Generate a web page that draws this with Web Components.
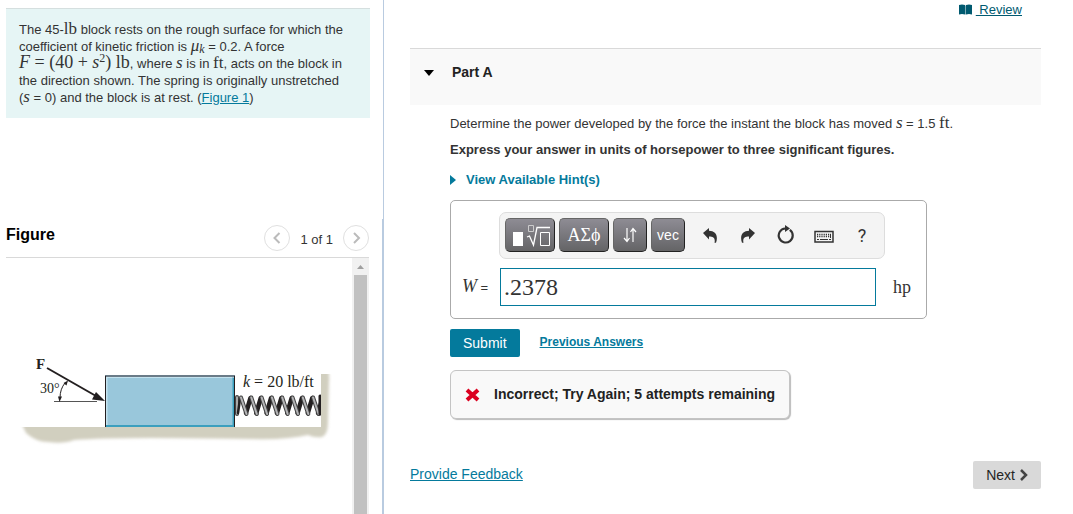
<!DOCTYPE html>
<html lang="en">
<head>
<meta charset="utf-8">
<meta name="viewport" content="width=device-width, initial-scale=1">
<title>Part A</title>
<style>
  body {
    --teal: #047a9c;
    --teal-dark: #005a70;
    --text: #333;
    --rule: #d9d9d9;
    --serif: "Liberation Serif", "Times New Roman", serif;
    margin: 0;
    font-family: "Liberation Sans", Arial, sans-serif;
    font-size: 13px;
    line-height: 17px;
    color: var(--text);
    background: #fff;
  }
  a { color: var(--teal); }
  sub, sup {
    font-size: 12px;
    line-height: 0;
    vertical-align: baseline;
    position: relative;
  }
  sub { top: 2px; }
  sup { top: -6px; }
</style>
</head>
<body>
<assignment-page>
  <problem-prompt slot="side">The 45-<math-term>lb</math-term> block rests on the rough surface for which the coefficient of kinetic friction is <math-term><i>μ<sub>k</sub></i></math-term> = 0.2. A force <math-term large><i>F</i> = (40 + <i>s</i><sup>2</sup>) lb</math-term>, where <math-term><i>s</i></math-term> is in <math-term>ft</math-term>, acts on the block in the direction shown. The spring is originally unstretched (<math-term><i>s</i></math-term> = 0) and the block is at rest. (<a href="#figure">Figure 1</a>)</problem-prompt>
  <figure-viewer slot="side" id="figure" count="1">
    <spring-diagram></spring-diagram>
  </figure-viewer>

  <review-link></review-link>
  <question-part label="Part A">
    <p>Determine the power developed by the force the instant the block has moved <math-term><i>s</i></math-term> = 1.5 <math-term>ft</math-term>.</p>
    <p><b>Express your answer in units of horsepower to three significant figures.</b></p>
    <hint-toggle>View Available Hint(s)</hint-toggle>
    <answer-box symbol="W" value=".2378" unit="hp">
      <equation-toolbar></equation-toolbar>
    </answer-box>
    <submit-row></submit-row>
    <feedback-message>Incorrect; Try Again; 5 attempts remaining</feedback-message>
  </question-part>
  <page-footer></page-footer>
</assignment-page>

<script>
class AssignmentPage extends HTMLElement {
  constructor() {
    super();
    const shadow = this.attachShadow({ mode: 'open' });
    shadow.innerHTML = `
      <style>
        :host {
          display: flex;
          height: 100vh;
          overflow: hidden;
        }
        aside {
          flex: 0 0 384px;
          display: flex;
          flex-direction: column;
          box-sizing: border-box;
          min-height: 0;
        }
        main {
          flex: 1;
          min-width: 0;
          padding: 0 32px 0 26px;
        }
      </style>
      <aside><slot name="side"></slot></aside>
      <main><slot></slot></main>
    `;
  }
}

class ProblemPrompt extends HTMLElement {
  constructor() {
    super();
    const shadow = this.attachShadow({ mode: 'open' });
    shadow.innerHTML = `
      <style>
        :host {
          display: block;
          padding: 8px 13px 101px 6px;
          border-right: 1px solid #b9cbe0;
        }
        div {
          padding: 12px 20px 12px 13px;
          border-top: 1px solid #d5dfdf;
          background: #e6f5f5;
        }
      </style>
      <div><slot></slot></div>
    `;
  }
}

class MathTerm extends HTMLElement {
  constructor() {
    super();
    const shadow = this.attachShadow({ mode: 'open' });
    // no whitespace round the slot: it would show up inside the sentence
    shadow.innerHTML = `<style>
        :host {
          font-family: var(--serif);
          font-size: 17px;
          line-height: 0;
          white-space: nowrap;
        }
        :host([large]) { font-size: 18px; }
      </style><slot></slot>`;
  }
}

class FigureViewer extends HTMLElement {
  constructor() {
    super();
    const count = this.getAttribute('count');
    const shadow = this.attachShadow({ mode: 'open' });
    shadow.innerHTML = `
      <style>
        :host {
          flex: 1;
          display: flex;
          flex-direction: column;
          min-height: 0;
          padding: 6px 13px 0 6px;
          border-right: 2px solid #b9cbe0;
        }
        header {
          display: flex;
          align-items: center;
          justify-content: space-between;
          padding-bottom: 6px;
          border-bottom: 1px solid var(--rule);
        }
        h2 {
          margin: 0;
          padding-bottom: 6px;
          font-size: 16px;
          line-height: 20px;
          color: #000;
        }
        nav {
          display: flex;
          align-items: center;
          gap: 10px;
        }
        nav span { padding-top: 2px; }
        button {
          display: grid;
          place-items: center;
          width: 26px;
          height: 26px;
          padding: 0;
          border: 1px solid #e0e0e0;
          border-radius: 50%;
          background: #fff;
        }
        .scroller {
          flex: 1;
          display: flex;
          min-height: 0;
          overflow: hidden;
        }
        .view {
          flex: 1;
          overflow: hidden;
        }
        .track {
          width: 17px;
          display: flex;
          flex-direction: column;
          align-items: center;
          background: #f1f1f1;
        }
        .track svg { flex: none; }
        .thumb {
          flex: 1;
          width: 13px;
          background: #c1c1c1;
        }
      </style>
      <header>
        <h2>Figure</h2>
        <nav aria-label="Figures">
          <button aria-label="Previous figure">
            <svg width="12" height="12" viewBox="0 0 12 12" fill="none" stroke="#bbb" stroke-width="2"><path d="M8.500 1 3.500 6l5 5"/></svg>
          </button>
          <span>1 of ${count}</span>
          <button aria-label="Next figure">
            <svg width="12" height="12" viewBox="0 0 12 12" fill="none" stroke="#bbb" stroke-width="2"><path d="m4 1 5 5-5 5"/></svg>
          </button>
        </nav>
      </header>
      <div class="scroller">
        <div class="view"><slot></slot></div>
        <div class="track">
          <svg width="17" height="17" viewBox="0 0 17 17" fill="#a0a0a0"><path d="M5 11l3.500-4 3.500 4z"/></svg>
          <div class="thumb"></div>
        </div>
      </div>
    `;
  }
}

class SpringDiagram extends HTMLElement {
  constructor() {
    super();
    const shadow = this.attachShadow({ mode: 'open' });

    // coils: dark back strand, then the lighter front strand over it
    let back = '';
    let front = '';
    for (let i = 0; i < 8; i++) {
      const x = 241 + i * 10.3;
      back += `<path d="M${x + 5} 413 ${x + 9.5} 398"/>`;
      front += `<path d="M${x} 397.500 ${x + 5.500} 414"/>`;
    }

    shadow.innerHTML = `
      <style>
        :host { display: block; }
        svg { display: block; }
        text { font-family: var(--serif); fill: #231f20; }
      </style>
      <svg width="346" height="256" viewBox="6 258 346 256" role="img" aria-label="Block pushed against a spring">
        <defs>
          <filter id="soft" x="-5%" y="-20%" width="110%" height="140%"><feGaussianBlur stdDeviation="1.800"/></filter>
          <clipPath id="ground"><path d="M24 427H321V374H335V450H20V427z"/></clipPath>
          <clipPath id="room"><path d="M234 390H321V420H234z"/></clipPath>
        </defs>
        <g clip-path="url(#ground)">
          <path filter="url(#soft)" fill="#d1cfbf" d="M20 420H316V368h10q4 3 3 14l-1 40q0 13-6 15-8 1-14-2-20 5-58 4-60-1-100-1-50 0-76 2-10 4-26 2-12 0-22-9z"/>
        </g>

        <path fill="#99c7db" d="M105 375H235V427H105z"/>
        <path fill="#c4e2ee" d="M106 377H232v1H107.500v47H106z"/>
        <path fill="#3b9fbe" d="M106 425H234v2H106zM232.500 378h1.500v48h-1.500z"/>
        <path fill="#6a7b87" d="M105 375H235v2H105z"/>
        <path fill="#231f20" d="M105 376h1v51h-1zM234 376h1v51h-1z"/>

        <g fill="none" stroke-linecap="round" clip-path="url(#room)">
          <path d="M237 397V414" stroke="#444" stroke-width="4"/>
          <path d="M237 397V414" stroke="#ccc" stroke-width="1.500"/>
          <path d="M238 413 240 399" stroke="#231f20" stroke-width="2.500"/>
          <g stroke="#231f20" stroke-width="4.500">${back}</g>
          <g stroke="#444" stroke-width="4">${front}</g>
          <g stroke="#b5b5b7" stroke-width="2">${front}</g>
          <path d="M320 396V414" stroke="#231f20" stroke-width="3"/>
        </g>

        <path d="M47 368 96 396" stroke="#231f20" stroke-width="2"/>
        <path d="M105 401 92 399.500 96 392z" fill="#231f20"/>
        <path d="M54 401.500H97" stroke="#555"/>
        <path d="M65 383q-5 6-5 15" fill="none" stroke="#231f20"/>
        <path d="M68 380.500l-1.500 5-3-2.500zM59.500 402l-1.500-5.500h4z" fill="#231f20"/>
        <text x="36" y="369" font-size="15" font-weight="bold">F</text>
        <text x="40" y="393" font-size="14">30°</text>
        <text x="243" y="387" font-size="16"><tspan font-style="italic">k</tspan> = 20 lb/ft</text>
      </svg>
    `;
  }
}

class ReviewLink extends HTMLElement {
  constructor() {
    super();
    const shadow = this.attachShadow({ mode: 'open' });
    shadow.innerHTML = `
      <style>
        :host {
          display: flex;
          justify-content: flex-end;
          align-items: center;
          gap: 4px;
          height: 18px;
          padding: 0 19px 30px 0;
        }
        a {
          color: var(--teal-dark);
          white-space: pre;
        }
      </style>
      <svg width="13" height="11" viewBox="0 0 13 11" fill="#005a70"><path d="M0 1q3-1 6 0v9.500q-3-1-6 0zM7 1q3-1 6 0v9.500q-3-1-6 0z"/><path d="M6 1.500h1v9H6z" opacity=".5"/></svg>
      <a href="#review"> Review</a>
    `;
  }
}

class QuestionPart extends HTMLElement {
  constructor() {
    super();
    const shadow = this.attachShadow({ mode: 'open' });
    shadow.innerHTML = `
      <style>
        :host { display: block; }
        header {
          padding: 15px 16px 24px 14px;
          border-top: 1px solid var(--rule);
          background: #f9f9f9;
        }
        button {
          display: flex;
          align-items: center;
          gap: 18px;
          padding: 0;
          border: none;
          background: none;
          color: #222;
          font: bold 14px/17px "Liberation Sans", Arial, sans-serif;
        }
        .body { padding: 10px 0 0 40px; }
        ::slotted(p) { margin: 0 0 9px; }
      </style>
      <header>
        <button aria-expanded="true">
          <svg width="10" height="6" viewBox="0 0 10 6"><path d="M0 0h10L5 6z"/></svg>
          ${this.getAttribute('label')}
        </button>
      </header>
      <div class="body"><slot></slot></div>
    `;
  }
}

class HintToggle extends HTMLElement {
  constructor() {
    super();
    const shadow = this.attachShadow({ mode: 'open' });
    shadow.innerHTML = `
      <style>
        :host {
          display: block;
          padding: 4px 0 12px;
        }
        button {
          display: flex;
          align-items: center;
          gap: 10px;
          padding: 0;
          border: none;
          background: none;
          color: var(--teal);
          font: bold 13px/17px "Liberation Sans", Arial, sans-serif;
        }
      </style>
      <button aria-expanded="false">
        <svg width="6" height="10" viewBox="0 0 6 10" fill="#047a9c"><path d="M0 0l6 5-6 5z"/></svg>
        <slot></slot>
      </button>
    `;
  }
}

class AnswerBox extends HTMLElement {
  constructor() {
    super();
    const shadow = this.attachShadow({ mode: 'open' });
    shadow.innerHTML = `
      <style>
        :host {
          display: grid;
          grid-template-columns: 38px 1fr 39px;
          row-gap: 9px;
          max-width: 453px;
          padding: 11px 11px 12px;
          border: 1px solid #aaa;
          border-radius: 5px;
        }
        ::slotted(equation-toolbar) {
          grid-column: 2;
          margin: 0 -9px 0 -1px;
        }
        label {
          grid-column: 1;
          align-self: center;
          white-space: nowrap;
        }
        i {
          font-family: var(--serif);
          font-size: 18px;
        }
        input {
          min-width: 0;
          height: 38px;
          box-sizing: border-box;
          margin: 0;
          padding: 0 3px;
          border: 1px solid var(--teal);
          border-radius: 0;
          background: #fff;
          color: var(--text);
          font: 24px "Liberation Serif", "Times New Roman", serif;
        }
        .unit {
          align-self: center;
          justify-self: end;
          padding-right: 4px;
          font-family: var(--serif);
          font-size: 18px;
        }
      </style>
      <slot></slot>
      <label for="answer"><i>${this.getAttribute('symbol')}</i> =</label>
      <input id="answer" type="text" value="${this.getAttribute('value')}">
      <span class="unit">${this.getAttribute('unit')}</span>
    `;
  }
}

class EquationToolbar extends HTMLElement {
  constructor() {
    super();
    const shadow = this.attachShadow({ mode: 'open' });
    shadow.innerHTML = `
      <style>
        :host {
          display: flex;
          gap: 4px;
          padding: 5px 3px 6px 5px;
          border: 1px solid #ddd;
          border-radius: 7px;
          background: #f4f4f4;
        }
        button {
          display: grid;
          place-items: center;
          box-sizing: border-box;
          height: 34px;
          padding: 0;
          border: none;
          background: none;
          color: var(--text);
        }
        .key {
          width: 34px;
          border: 1px solid #222;
          border-top-color: #666;
          border-left-color: #666;
          border-radius: 5px;
          background: linear-gradient(#8e8c94, #646466);
          color: #fff;
          font: 14px "Liberation Sans", Arial, sans-serif;
        }
        .wide { width: 50px; }
        .greek { font: 18px "Liberation Serif", "Times New Roman", serif; }
        .icons {
          flex: 1;
          display: grid;
          grid-template-columns: repeat(5, 1fr);
          padding-left: 2px;
        }
        .help { font: 18px Roboto, sans-serif; }
      </style>
      <button class="key wide" aria-label="Templates">
        <svg width="40" height="25" viewBox="0 0 40 25" fill="none" stroke="#fff">
          <path d="M3 9h10v14H3z" fill="#fff" stroke="none"/>
          <path d="M18.500 2.500h5v6h-5z" stroke="#ccc"/>
          <path d="M17 14l2.500-1 4 9 3.500-17.500h13" stroke-width="1.300"/>
          <path d="M30.500 9.500h9v13h-9z"/>
        </svg>
      </button>
      <button class="key wide greek" aria-label="Symbols">ΑΣϕ</button>
      <button class="key" aria-label="Subscript and superscript">
        <svg width="14" height="16" viewBox="0 0 14 16" fill="none" stroke="#fff" stroke-width="1.200"><path d="M4 1v13M1 11l3 3.500L6.500 11M10 15V2M7.500 5 10 1.500 13 5"/></svg>
      </button>
      <button class="key" aria-label="Vector">vec</button>
      <div class="icons">
        <button aria-label="Undo">
          <svg width="14" height="15" viewBox="0 0 14 15" fill="#333"><path d="M0 5 6 0v2.800c6.500 0 9.500 5 7 12h-1.500c1-4.500-1-6.300-5.500-6.300v3z"/></svg>
        </button>
        <button aria-label="Redo">
          <svg width="14" height="15" viewBox="0 0 14 15" fill="#333"><path d="M14 5 8 0v2.800c-6.500 0-9.500 5-7 12h1.500c-1-4.500 1-6.300 5.500-6.300v3z"/></svg>
        </button>
        <button aria-label="Reset">
          <svg width="18" height="20" viewBox="0 0 18 20"><path d="M12.800 4.800a7 7 0 1 1-4.600-1.300" fill="none" stroke="#333" stroke-width="2.200"/><path d="M8 0l5 3.500L8 7z" fill="#333"/></svg>
        </button>
        <button aria-label="Keyboard">
          <svg width="20" height="17" viewBox="0 0 20 17" fill="none" stroke="#333"><path d="M1 4.500h18v10.500H1z" stroke-width="1.500"/><path d="M3 7.500h14M3 9.500h14" stroke-width="1.500" stroke-dasharray="1.200 1"/><path d="M3 12.500h2M6 12.500h8M15 12.500h2M16.500 7v4"/></svg>
        </button>
        <button class="help" aria-label="Help">?</button>
      </div>
    `;
  }
}

class SubmitRow extends HTMLElement {
  constructor() {
    super();
    const shadow = this.attachShadow({ mode: 'open' });
    shadow.innerHTML = `
      <style>
        :host {
          display: flex;
          align-items: center;
          gap: 20px;
          padding: 10px 0 13px;
        }
        button {
          height: 28px;
          padding: 0 13px;
          border: none;
          border-radius: 2px;
          background: var(--teal);
          color: #fff;
          font: 14px "Liberation Sans", Arial, sans-serif;
        }
        a {
          padding-bottom: 2px;
          color: var(--teal);
          font-size: 12px;
          font-weight: bold;
        }
      </style>
      <button type="submit">Submit</button>
      <a href="#previous">Previous Answers</a>
    `;
  }
}

class FeedbackMessage extends HTMLElement {
  constructor() {
    super();
    const shadow = this.attachShadow({ mode: 'open' });
    shadow.innerHTML = `
      <style>
        :host {
          display: flex;
          align-items: center;
          gap: 14px;
          width: fit-content;
          padding: 15px 14px;
          border: 1px solid #c4c4c4;
          border-radius: 6px;
          background: #f9f9f9;
          box-shadow: 1px 1px 1px #bbb;
          color: #222;
          font-size: 14px;
          font-weight: bold;
        }
      </style>
      <svg width="15" height="14" viewBox="0 0 15 14" stroke="#db0020" stroke-width="4"><path d="M2 2l11 10M13 2 2 12"/></svg>
      <span role="status"><slot></slot></span>
    `;
  }
}

class PageFooter extends HTMLElement {
  constructor() {
    super();
    const shadow = this.attachShadow({ mode: 'open' });
    shadow.innerHTML = `
      <style>
        :host {
          display: flex;
          align-items: center;
          justify-content: space-between;
          padding-top: 42px;
          font-size: 14px;
        }
        a {
          padding-bottom: 2px;
          color: var(--teal);
        }
        button {
          display: flex;
          align-items: center;
          gap: 5px;
          height: 28px;
          padding: 0 13px;
          border: none;
          border-radius: 2px;
          background: #d9d9d9;
          color: #252525;
          font: 14px "Liberation Sans", Arial, sans-serif;
        }
      </style>
      <a href="#feedback">Provide Feedback</a>
      <button>Next
        <svg width="8" height="12" viewBox="0 0 8 12" fill="none" stroke="#444" stroke-width="2.500"><path d="M1 1l5 5-5 5"/></svg>
      </button>
    `;
  }
}

customElements.define('assignment-page', AssignmentPage);
customElements.define('problem-prompt', ProblemPrompt);
customElements.define('math-term', MathTerm);
customElements.define('figure-viewer', FigureViewer);
customElements.define('spring-diagram', SpringDiagram);
customElements.define('review-link', ReviewLink);
customElements.define('question-part', QuestionPart);
customElements.define('hint-toggle', HintToggle);
customElements.define('answer-box', AnswerBox);
customElements.define('equation-toolbar', EquationToolbar);
customElements.define('submit-row', SubmitRow);
customElements.define('feedback-message', FeedbackMessage);
customElements.define('page-footer', PageFooter);
</script>
</body>
</html>
